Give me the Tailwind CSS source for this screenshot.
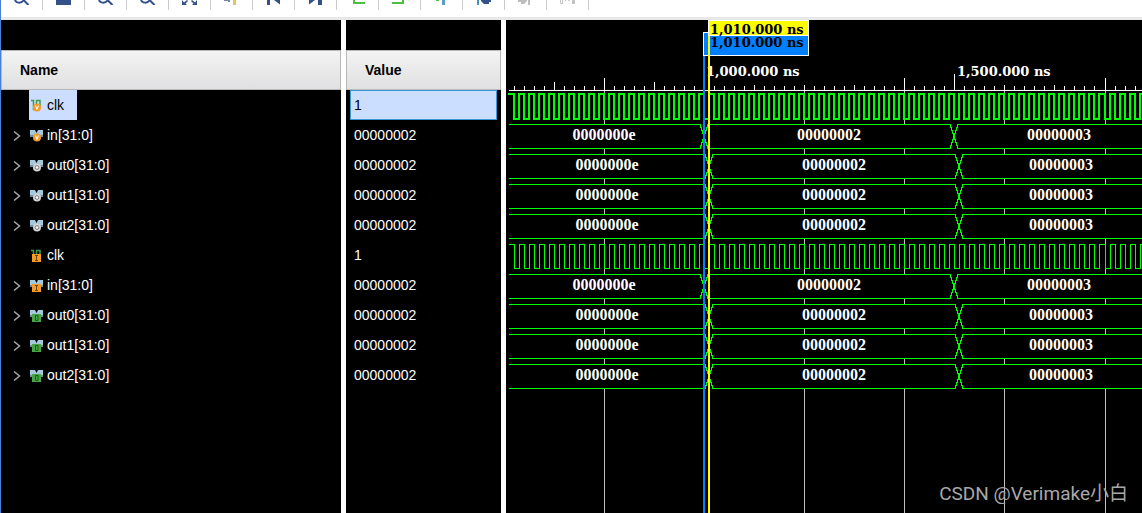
<!DOCTYPE html>
<html lang="en">
<head>
  <meta charset="UTF-8" />
  <meta name="viewport" content="width=device-width, initial-scale=1" />
  <title>Waveform Viewer</title>
  <script src="https://cdn.jsdelivr.net/npm/@tailwindcss/browser@4"></script>
</head>
<body class="relative min-h-screen flex flex-col overflow-hidden bg-white border-l border-[#4a7fd8] font-['Liberation_Sans',Arial,sans-serif] text-sm text-white">

  <!-- Icon set for the signal list -->
  <svg class="hidden" aria-hidden="true">
    <symbol id="bus" viewBox="0 0 14 14">
      <path d="M0 1h5l1.500 3L8 1h5v6H0z" fill="#a3c9dc" />
      <path d="M0 6h4v2H0zM9 6h4v2H9z" fill="#6d8fa3" />
    </symbol>
    <symbol id="wave" viewBox="0 0 14 14">
      <path d="M1 1.500h2.500v9H6.500v-9h3.500V8" fill="none" stroke="#3c9a50" stroke-width="1.500" />
    </symbol>
    <symbol id="badge-v" viewBox="0 0 14 14">
      <circle cx="7" cy="8.500" r="4" fill="#f49a26" />
      <path d="M5.500 6.500L7 10.500 8.500 6.500" fill="none" stroke="#fff" />
    </symbol>
    <symbol id="badge-reg" viewBox="0 0 14 14">
      <circle cx="7" cy="8.500" r="4" fill="#d4d4d4" />
      <circle cx="7" cy="8.500" r="1.800" fill="#fff" stroke="#777" />
    </symbol>
    <symbol id="badge-i" viewBox="0 0 14 14">
      <path d="M2 5h9v8H2z" fill="#f59b28" />
      <path d="M5 6.500h3M6.500 6.500v5M5 11.500h3" fill="none" stroke="#6b4310" />
    </symbol>
    <symbol id="badge-o" viewBox="0 0 14 14">
      <path d="M2 5h9v8H2z" fill="#47a447" />
      <path d="M5.500 6.500h2.500v5H5.500z" fill="none" stroke="#1d5a20" />
    </symbol>
    <symbol id="chevron" viewBox="0 0 8 10">
      <path d="M1 0.500L6.500 5 1 9.500" fill="none" stroke="#a6a6a6" stroke-width="1.500" />
    </symbol>
  </svg>

  <header class="h-5 shrink-0 flex items-start overflow-hidden border-b-3 border-[#e8e8e8]">
    <button type="button" aria-label="Zoom" class="w-[42px] h-[10px] flex justify-center items-start border-r border-[#cccccc]">
      <svg class="w-[17px] h-[5px]" viewBox="0 0 17 5"><path d="M2 0c1 3 6 4 9 0M10.500 0l5 5" fill="none" stroke="#33508a" stroke-width="2" /></svg>
    </button>
    <button type="button" aria-label="Save" class="w-[42px] h-[10px] flex justify-center items-start border-r border-[#cccccc]">
      <svg class="w-[17px] h-[5px]" viewBox="0 0 17 5"><path d="M1 0h15v5H1z" fill="#33508a" /></svg>
    </button>
    <button type="button" aria-label="Zoom In" class="w-[42px] h-[10px] flex justify-center items-start border-r border-[#cccccc]">
      <svg class="w-[17px] h-[5px]" viewBox="0 0 17 5"><path d="M2 0c1 3 6 4 9 0M10.500 0l5 5" fill="none" stroke="#33508a" stroke-width="2" /></svg>
    </button>
    <button type="button" aria-label="Zoom Out" class="w-[42px] h-[10px] flex justify-center items-start border-r border-[#cccccc]">
      <svg class="w-[17px] h-[5px]" viewBox="0 0 17 5"><path d="M2 0c1 3 6 4 9 0M10.500 0l5 5" fill="none" stroke="#33508a" stroke-width="2" /></svg>
    </button>
    <button type="button" aria-label="Zoom Fit" class="w-[42px] h-[10px] flex justify-center items-start border-r border-[#cccccc]">
      <svg class="w-[17px] h-[5px]" viewBox="0 0 17 5"><path d="M1 0v5h5L4.500 3.500 7 1 6 0 3 2.500zM16 0v5h-5l1.500-1.500L10 1l1-1 3 2.500z" fill="#33508a" /></svg>
    </button>
    <button type="button" aria-label="Go to Cursor" class="w-[42px] h-[10px] flex justify-center items-start border-r border-[#cccccc]">
      <svg class="w-[17px] h-[5px]" viewBox="0 0 17 5"><path d="M1 0h6v2H5V1H1z" fill="#7686a8" /><path d="M10 0h3v5h-3z" fill="#e3c65a" /></svg>
    </button>
    <button type="button" aria-label="Go to Time 0" class="w-[42px] h-[10px] flex justify-center items-start border-r border-[#cccccc]">
      <svg class="w-[17px] h-[5px]" viewBox="0 0 17 5"><path d="M2 0h3v5H2zM9 0h6v4.500z" fill="#33508a" /></svg>
    </button>
    <button type="button" aria-label="Go to Last Time" class="w-[42px] h-[10px] flex justify-center items-start border-r border-[#cccccc]">
      <svg class="w-[17px] h-[5px]" viewBox="0 0 17 5"><path d="M2 0h6L2 4.500zM11 0h4v5h-4z" fill="#33508a" /></svg>
    </button>
    <button type="button" aria-label="Previous Transition" class="w-[42px] h-[10px] flex justify-center items-start border-r border-[#cccccc]">
      <svg class="w-[17px] h-[5px]" viewBox="0 0 17 5"><path d="M5 0v3h11" fill="none" stroke="#4bbf43" stroke-width="2" /></svg>
    </button>
    <button type="button" aria-label="Next Transition" class="w-[42px] h-[10px] flex justify-center items-start border-r border-[#cccccc]">
      <svg class="w-[17px] h-[5px]" viewBox="0 0 17 5"><path d="M1 3h11V0" fill="none" stroke="#4bbf43" stroke-width="2" /></svg>
    </button>
    <button type="button" aria-label="Add Marker" class="w-[42px] h-[10px] flex justify-center items-start border-r border-[#cccccc]">
      <svg class="w-[17px] h-[5px]" viewBox="0 0 17 5"><path d="M3 0h3v1H3z" fill="#4bbf43" /><path d="M9 0h3v5H9z" fill="#5a9bc8" /></svg>
    </button>
    <button type="button" aria-label="Previous Marker" class="w-[42px] h-[10px] flex justify-center items-start border-r border-[#cccccc]">
      <svg class="w-[17px] h-[5px]" viewBox="0 0 17 5"><path d="M2 0h2v5H2z" fill="#4a90c0" /><path d="M6 0h10v2h-2v2h-5L6 1z" fill="#33508a" /></svg>
    </button>
    <button type="button" aria-label="Next Marker" disabled class="w-[42px] h-[10px] flex justify-center items-start border-r border-[#cccccc]">
      <svg class="w-[17px] h-[5px]" viewBox="0 0 17 5"><path d="M1 0h9v1L7 4H4V2H1zM11 0h2v5h-2z" fill="#bdbdbd" /></svg>
    </button>
    <button type="button" aria-label="Swap Cursors" disabled class="w-[42px] h-[10px] flex justify-center items-start border-r border-[#cccccc]">
      <svg class="w-[17px] h-[5px]" viewBox="0 0 17 5"><path d="M1.500 0v3.500h2V0M6 1l1-1M9 0l2 1" fill="none" stroke="#c4c4c4" /><path d="M13 0h3v4h-3z" fill="#c4c4c4" /></svg>
    </button>
  </header>

  <main class="flex-1 flex gap-[5px]">
    <!-- Names -->
    <section class="w-[340px] shrink-0 bg-black pt-[30px]" aria-label="Signal names">
      <h2 class="h-10 flex items-center pl-[18px] border border-[#b8b8b8] bg-linear-to-b from-[#f3f3f3] to-[#e0e0e2] text-black font-bold">Name</h2>
      <ul id="names"></ul>
    </section>

    <!-- Values -->
    <section class="w-[155px] shrink-0 bg-black pt-[30px]" aria-label="Signal values">
      <h2 class="h-10 flex items-center pl-[18px] border border-[#b8b8b8] bg-linear-to-b from-[#f3f3f3] to-[#e0e0e2] text-black font-bold">Value</h2>
      <ul class="px-1">
        <li class="h-[30px] flex items-center px-[3px] border border-[#3b99d8] bg-[#cbdeff] text-black">1</li>
        <li class="h-[30px] flex items-center px-1">00000002</li>
        <li class="h-[30px] flex items-center px-1">00000002</li>
        <li class="h-[30px] flex items-center px-1">00000002</li>
        <li class="h-[30px] flex items-center px-1">00000002</li>
        <li class="h-[30px] flex items-center px-1">1</li>
        <li class="h-[30px] flex items-center px-1">00000002</li>
        <li class="h-[30px] flex items-center px-1">00000002</li>
        <li class="h-[30px] flex items-center px-1">00000002</li>
        <li class="h-[30px] flex items-center px-1">00000002</li>
      </ul>
    </section>

    <!-- Waveforms -->
    <section class="relative flex-1 min-w-0 bg-black overflow-hidden" aria-label="Waveforms">
      <svg class="absolute inset-0 w-full h-full" shape-rendering="crispEdges">
        <g id="grid" fill="#c0c0c0"></g>
        <g id="ruler" fill="#ffffff"></g>
        <g id="signals" fill="none" stroke="#00ff00"></g>
        <g id="labels" fill="#ffffff" text-anchor="middle" class="font-['Liberation_Serif',serif] text-base font-bold"></g>
        <g fill="#ffffff" class="font-['DejaVu_Serif',serif] text-[13px] font-bold">
          <text x="200" y="56">1,000.000 ns</text>
          <text x="451" y="56">1,500.000 ns</text>
        </g>
        <!-- marker and cursor -->
        <path d="M197 36h2v2000h-2z" fill="#0080ff" />
        <path d="M197.500 12.500h105v23h-105z" fill="#0080ff" stroke="#ffffff" />
        <path d="M202 16h2v2020h-2z" fill="#ffff00" />
        <path d="M202.500 0.500h100v15h-100z" fill="#ffff00" stroke="#ffffff" />
        <g fill="#000000" class="font-['DejaVu_Serif',serif] text-[13px] font-bold">
          <text x="204" y="14">1,010.000 ns</text>
          <text x="204" y="27">1,010.000 ns</text>
        </g>
      </svg>
    </section>
  </main>

  <p class="absolute right-[14px] bottom-[5px] text-[19px] leading-7 text-[#a8a8a8] font-[Roboto,'Noto_Sans_CJK_SC',sans-serif]">CSDN @Verimake小白</p>

  <script>
    const signals = [
      { name: 'clk', icon: 'wave', badge: 'badge-v', kind: 'clock', selected: true },
      { name: 'in[31:0]', icon: 'bus', badge: 'badge-v', kind: 'in' },
      { name: 'out0[31:0]', icon: 'bus', badge: 'badge-reg', kind: 'out' },
      { name: 'out1[31:0]', icon: 'bus', badge: 'badge-reg', kind: 'out' },
      { name: 'out2[31:0]', icon: 'bus', badge: 'badge-reg', kind: 'out' },
      { name: 'clk', icon: 'wave', badge: 'badge-i', kind: 'clock' },
      { name: 'in[31:0]', icon: 'bus', badge: 'badge-i', kind: 'in' },
      { name: 'out0[31:0]', icon: 'bus', badge: 'badge-o', kind: 'out' },
      { name: 'out1[31:0]', icon: 'bus', badge: 'badge-o', kind: 'out' },
      { name: 'out2[31:0]', icon: 'bus', badge: 'badge-o', kind: 'out' },
    ];

    // Name column
    document.getElementById('names').innerHTML = signals.map(s => `
      <li class="h-[30px] flex items-center pl-3">
        ${s.kind === 'clock'
          ? '<span class="w-4"></span>'
          : '<button type="button" aria-label="Expand" class="w-4 pt-0.5"><svg class="w-2 h-[10px]"><use href="#chevron" /></svg></button>'}
        <span class="${s.selected ? 'h-full flex items-center gap-[3px] pl-px pr-[13px] bg-[#cbdeff] text-black' : 'h-full flex items-center gap-[3px] pl-px pr-[13px]'}">
          <svg class="w-[14px] h-[14px] mt-0.5"><use href="#${s.icon}" /><use href="#${s.badge}" /></svg>${s.name}
        </span>
      </li>`).join('');

    const END = 4000;
    // 5 px for 10 ns; 800 ns is at x = 98
    const toX = ns => 98 + Math.trunc((ns - 800) * 501 / 1000);

    // Grid lines every 200 ns
    let grid = '';
    for (let t = 800; toX(t) < END; t += 200) {
      grid += `<rect x="${toX(t)}" y="71" width="1" height="2000" />`;
    }
    document.getElementById('grid').innerHTML = grid;

    // Ruler
    const tall = { 700: 62, 800: 58, 900: 62, 1100: 65, 1200: 65, 1300: 65, 1400: 58, 1500: 54, 1600: 65, 1700: 65, 1800: 58 };
    let ruler = `<rect x="3" y="70" width="${END}" height="1" />`;
    for (let t = 620; toX(t) < END; t += 20) {
      const y = tall[t] || 66;
      ruler += `<rect x="${toX(t)}" y="${y}" width="1" height="${70 - y}" />`;
    }
    document.getElementById('ruler').innerHTML = ruler;

    // Signals
    const values = ['0000000e', '00000002', '00000003'];
    const centers = { in: [98, 323, 553], out: [101, 328, 555] };
    const changes = { in: [198, 448], out: [203, 453] };
    let waves = '', labels = '';
    signals.forEach((s, i) => {
      const top = 74 + i * 30;
      if (s.kind === 'clock') {
        const o = s.selected ? 0 : 0.5;
        const hi = top + o, lo = hi + (s.selected ? 25 : 24);
        let d = `M${s.selected ? 2 : 3} ${hi}`;
        for (let t = 620; toX(t) < END; t += 20) {
          d += `H${toX(t) + o}V${lo}H${toX(t) + 5 + o}V${hi}`;
        }
        waves += `<path d="${d}" stroke-width="${s.selected ? 2 : 1}" />`;
        return;
      }
      const y1 = top + 0.5, y2 = y1 + 24;
      const [a, b] = changes[s.kind];
      waves += `<rect x="3" y="${top}" width="${END}" height="25" fill="#000000" stroke="none" />`;
      waves += `<path d="M3 ${y1}H${a - 4}L${a + 4} ${y2}H${b - 4}L${b + 4} ${y1}H${END}" />`;
      waves += `<path d="M3 ${y2}H${a - 4}L${a + 4} ${y1}H${b - 4}L${b + 4} ${y2}H${END}" />`;
      values.forEach((v, n) => {
        labels += `<text x="${centers[s.kind][n]}" y="${top + 16}">${v}</text>`;
      });
    });
    document.getElementById('signals').innerHTML = waves;
    document.getElementById('labels').innerHTML = labels;
  </script>
</body>
</html>
